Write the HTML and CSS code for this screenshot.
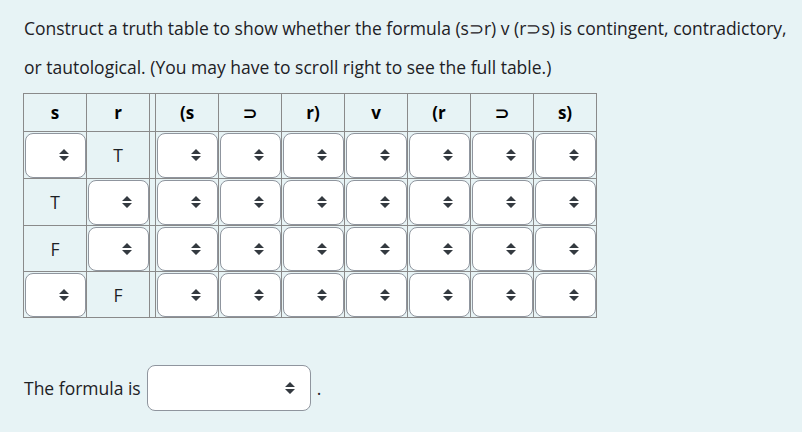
FILE: index.html
```html
<!DOCTYPE html>
<html>
<head>
<meta charset="utf-8">
<link rel="stylesheet" href="styles.css">
</head>
<body>
<div class="page">
  <p class="question">Construct a truth table to show whether the formula (s⊃r) v (r⊃s) is contingent, contradictory, or tautological. (You may have to scroll right to see the full table.)</p>
  <table class="truth">
    <colgroup>
      <col class="c"><col class="c"><col class="sp"><col class="c"><col class="c"><col class="c"><col class="c"><col class="c"><col class="c"><col class="c">
    </colgroup>
    <thead>
      <tr><th>s</th><th>r</th><th class="spc"></th><th>(s</th><th>⊃</th><th>r)</th><th>v</th><th>(r</th><th>⊃</th><th>s)</th></tr>
    </thead>
    <tbody>
      <tr class="r1">
        <td><div class="sel"><svg viewBox="0 0 10 12"><path d="M5 0L0 5h10zM5 12L0 7h10z"/></svg></div></td>
        <td class="val">T</td><td class="spc"></td>
        <td><div class="sel"><svg viewBox="0 0 10 12"><path d="M5 0L0 5h10zM5 12L0 7h10z"/></svg></div></td>
        <td><div class="sel"><svg viewBox="0 0 10 12"><path d="M5 0L0 5h10zM5 12L0 7h10z"/></svg></div></td>
        <td><div class="sel"><svg viewBox="0 0 10 12"><path d="M5 0L0 5h10zM5 12L0 7h10z"/></svg></div></td>
        <td><div class="sel"><svg viewBox="0 0 10 12"><path d="M5 0L0 5h10zM5 12L0 7h10z"/></svg></div></td>
        <td><div class="sel"><svg viewBox="0 0 10 12"><path d="M5 0L0 5h10zM5 12L0 7h10z"/></svg></div></td>
        <td><div class="sel"><svg viewBox="0 0 10 12"><path d="M5 0L0 5h10zM5 12L0 7h10z"/></svg></div></td>
        <td><div class="sel"><svg viewBox="0 0 10 12"><path d="M5 0L0 5h10zM5 12L0 7h10z"/></svg></div></td>
      </tr>
      <tr class="r2">
        <td class="val">T</td>
        <td><div class="sel"><svg viewBox="0 0 10 12"><path d="M5 0L0 5h10zM5 12L0 7h10z"/></svg></div></td><td class="spc"></td>
        <td><div class="sel"><svg viewBox="0 0 10 12"><path d="M5 0L0 5h10zM5 12L0 7h10z"/></svg></div></td>
        <td><div class="sel"><svg viewBox="0 0 10 12"><path d="M5 0L0 5h10zM5 12L0 7h10z"/></svg></div></td>
        <td><div class="sel"><svg viewBox="0 0 10 12"><path d="M5 0L0 5h10zM5 12L0 7h10z"/></svg></div></td>
        <td><div class="sel"><svg viewBox="0 0 10 12"><path d="M5 0L0 5h10zM5 12L0 7h10z"/></svg></div></td>
        <td><div class="sel"><svg viewBox="0 0 10 12"><path d="M5 0L0 5h10zM5 12L0 7h10z"/></svg></div></td>
        <td><div class="sel"><svg viewBox="0 0 10 12"><path d="M5 0L0 5h10zM5 12L0 7h10z"/></svg></div></td>
        <td><div class="sel"><svg viewBox="0 0 10 12"><path d="M5 0L0 5h10zM5 12L0 7h10z"/></svg></div></td>
      </tr>
      <tr class="r3">
        <td class="val">F</td>
        <td><div class="sel"><svg viewBox="0 0 10 12"><path d="M5 0L0 5h10zM5 12L0 7h10z"/></svg></div></td><td class="spc"></td>
        <td><div class="sel"><svg viewBox="0 0 10 12"><path d="M5 0L0 5h10zM5 12L0 7h10z"/></svg></div></td>
        <td><div class="sel"><svg viewBox="0 0 10 12"><path d="M5 0L0 5h10zM5 12L0 7h10z"/></svg></div></td>
        <td><div class="sel"><svg viewBox="0 0 10 12"><path d="M5 0L0 5h10zM5 12L0 7h10z"/></svg></div></td>
        <td><div class="sel"><svg viewBox="0 0 10 12"><path d="M5 0L0 5h10zM5 12L0 7h10z"/></svg></div></td>
        <td><div class="sel"><svg viewBox="0 0 10 12"><path d="M5 0L0 5h10zM5 12L0 7h10z"/></svg></div></td>
        <td><div class="sel"><svg viewBox="0 0 10 12"><path d="M5 0L0 5h10zM5 12L0 7h10z"/></svg></div></td>
        <td><div class="sel"><svg viewBox="0 0 10 12"><path d="M5 0L0 5h10zM5 12L0 7h10z"/></svg></div></td>
      </tr>
      <tr class="r4">
        <td><div class="sel"><svg viewBox="0 0 10 12"><path d="M5 0L0 5h10zM5 12L0 7h10z"/></svg></div></td>
        <td class="val">F</td><td class="spc"></td>
        <td><div class="sel"><svg viewBox="0 0 10 12"><path d="M5 0L0 5h10zM5 12L0 7h10z"/></svg></div></td>
        <td><div class="sel"><svg viewBox="0 0 10 12"><path d="M5 0L0 5h10zM5 12L0 7h10z"/></svg></div></td>
        <td><div class="sel"><svg viewBox="0 0 10 12"><path d="M5 0L0 5h10zM5 12L0 7h10z"/></svg></div></td>
        <td><div class="sel"><svg viewBox="0 0 10 12"><path d="M5 0L0 5h10zM5 12L0 7h10z"/></svg></div></td>
        <td><div class="sel"><svg viewBox="0 0 10 12"><path d="M5 0L0 5h10zM5 12L0 7h10z"/></svg></div></td>
        <td><div class="sel"><svg viewBox="0 0 10 12"><path d="M5 0L0 5h10zM5 12L0 7h10z"/></svg></div></td>
        <td><div class="sel"><svg viewBox="0 0 10 12"><path d="M5 0L0 5h10zM5 12L0 7h10z"/></svg></div></td>
      </tr>
    </tbody>
  </table>
  <div class="answer">
    <span class="label">The formula is</span>
    <div class="sel wide"><svg viewBox="0 0 10 12"><path d="M5 0L0 5h10zM5 12L0 7h10z"/></svg></div>
    <span class="dot">.</span>
  </div>
</div>
</body>
</html>
```

FILE: styles.css
```css
html, body {
  margin: 0;
  padding: 0;
  background: #e7f3f5;
}
body {
  font-family: "Open Sans", "Noto Sans", sans-serif;
  font-size: 17.5px;
  color: #1d2125;
}
.page {
  padding: 9px 0 0 24px;
}
.question {
  margin: 0;
  line-height: 39px;
  width: 772px;
}
.truth {
  margin-top: 6px;
  margin-left: -1px;
  border-collapse: collapse;
  table-layout: fixed;
}
.truth col.c { width: 63px; }
.truth col.sp { width: 6px; }
.truth th, .truth td {
  border: 1px solid #8a8a8a;
  padding: 0;
  text-align: center;
}
.truth th {
  height: 37px;
  font-weight: 700;
  font-size: 17px;
  color: #000;
}
.truth td {
  height: 46px;
}
.truth tr.r3 td, .truth tr.r4 td {
  height: 45px;
}
.truth td.val {
  font-size: 17.5px;
}
.sel {
  box-sizing: border-box;
  height: 45px;
  margin: 0 auto;
  width: 61px;
  background: #fff;
  border: 1px solid #8f959e;
  border-radius: 8px;
  display: flex;
  align-items: center;
  justify-content: flex-end;
  padding-right: 16px;
}
.truth tr.r3 .sel, .truth tr.r4 .sel {
  height: 44px;
}
.sel svg {
  width: 10px;
  height: 12px;
  fill: #343a40;
}
.answer {
  margin-top: 47px;
  display: flex;
  align-items: center;
  gap: 6px;
}
.sel.wide {
  width: 164px;
  height: 46px;
  margin: 0;
  padding-right: 15px;
}
.dot {
  margin-left: 0;
}
```
